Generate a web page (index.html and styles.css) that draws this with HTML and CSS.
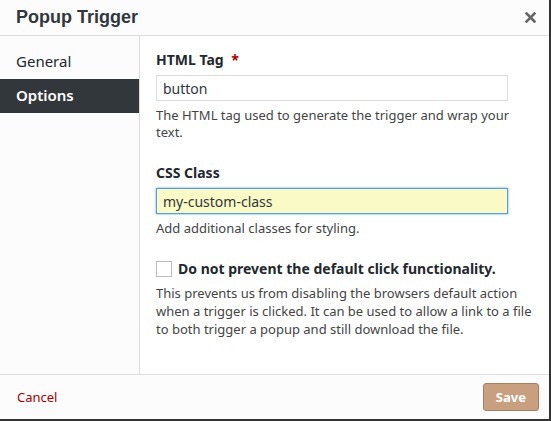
FILE: index.html
```html
<!DOCTYPE html>
<html lang="en">
<head>
  <meta charset="UTF-8" />
  <title>Popup Trigger</title>
  <link rel="stylesheet" href="styles.css">
</head>
<body>

  <div class="modal">
    <div class="modal-header">
      <h1>Popup Trigger</h1>
      <svg class="close" width="11" height="11" viewBox="0 0 11 11">
        <path d="M1.5 1.5 L9.5 9.5 M9.5 1.5 L1.5 9.5" stroke="#666" stroke-width="2.6" stroke-linecap="square" />
      </svg>
    </div>

    <div class="modal-body">
      <ul class="tabs">
        <li>General</li>
        <li class="active">Options</li>
      </ul>

      <div class="panel">
        <div class="field">
          <label>HTML Tag <span class="required">*</span></label>
          <input type="text" class="text-input" value="button" />
          <p class="desc">The HTML tag used to generate the trigger and wrap your text.</p>
        </div>

        <div class="field">
          <label>CSS Class</label>
          <input type="text" class="text-input focused" value="my-custom-class" />
          <p class="desc">Add additional classes for styling.</p>
        </div>

        <div class="field">
          <label class="check-label"><span class="checkbox"></span>Do not prevent the default click functionality.</label>
          <p class="desc tall">This prevents us from disabling the browsers default action when a trigger is clicked. It can be used to allow a link to a file to both trigger a popup and still download the file.</p>
        </div>
      </div>
    </div>

    <div class="modal-footer">
      <a class="cancel">Cancel</a>
      <button class="save">Save</button>
    </div>
  </div>

</body>
</html>
```

FILE: styles.css
```css
body {
  margin: 0;
  background: #333;
  font-family: "Noto Sans", "Liberation Sans", sans-serif;
  color: #444;
}

.modal {
  width: 549px;
  height: 419px;
  background: #fff;
  display: flex;
  flex-direction: column;
}

.modal-header {
  height: 35px;
  border-bottom: 1px solid #ddd;
  background: #fcfcfc;
  display: flex;
  align-items: center;
  justify-content: space-between;
  padding: 0 13px 0 16px;
}

.modal-header h1 {
  margin: 0;
  font-family: "Liberation Sans", Arial, sans-serif;
  font-size: 18px;
  font-weight: bold;
  color: #32373c;
}

.close {
  display: block;
}

.modal-body {
  flex: 1;
  display: flex;
  min-height: 0;
}

.tabs {
  list-style: none;
  margin: 0;
  padding: 9px 0 0;
  width: 139px;
  background: #fcfcfc;
  border-right: 1px solid #ddd;
}

.tabs li {
  height: 34px;
  line-height: 33px;
  padding-left: 16px;
  font-size: 15px;
  color: #23282d;
}

.tabs li.active {
  background: #32373c;
  color: #fff;
  font-weight: 600;
}

.panel {
  flex: 1;
  padding: 14px 16px;
}

.field {
  margin-bottom: 22px;
}

.field label {
  display: block;
  font-size: 14px;
  font-weight: bold;
  color: #23282d;
  margin-bottom: 6px;
}

.required {
  color: #a00;
  margin-left: 4px;
}

.text-input {
  display: block;
  width: 352px;
  height: 26px;
  box-sizing: border-box;
  border: 1px solid #ddd;
  padding: 0 6px;
  font-family: inherit;
  font-size: 14px;
  color: #32373c;
  background: #fff;
  margin: 0;
}

.text-input.focused {
  background: #fafac6;
  border-color: #5b9dd9;
  box-shadow: 0 0 2px rgba(30, 140, 190, 0.8);
}

.desc {
  margin: 6px 0 0;
  font-size: 13px;
  line-height: 17px;
  color: #444;
}

.desc.tall {
  line-height: 18px;
  margin-top: 4px;
}

.check-label {
  display: flex !important;
  align-items: center;
  margin-top: 3px;
}

.checkbox {
  width: 14px;
  height: 14px;
  border: 1px solid #bbb;
  background: #fff;
  margin-right: 6px;
}

.modal-footer {
  height: 44px;
  border-top: 1px solid #ddd;
  background: #fcfcfc;
  display: flex;
  align-items: center;
  justify-content: space-between;
  padding: 0 10px 0 17px;
}

.cancel {
  color: #a00;
  font-size: 13px;
}

.save {
  height: 28px;
  padding: 0 12px;
  background: #c8a080;
  border: 1px solid #a8805f;
  border-radius: 3px;
  color: #fff;
  font-family: inherit;
  font-size: 13px;
  font-weight: bold;
}
```
